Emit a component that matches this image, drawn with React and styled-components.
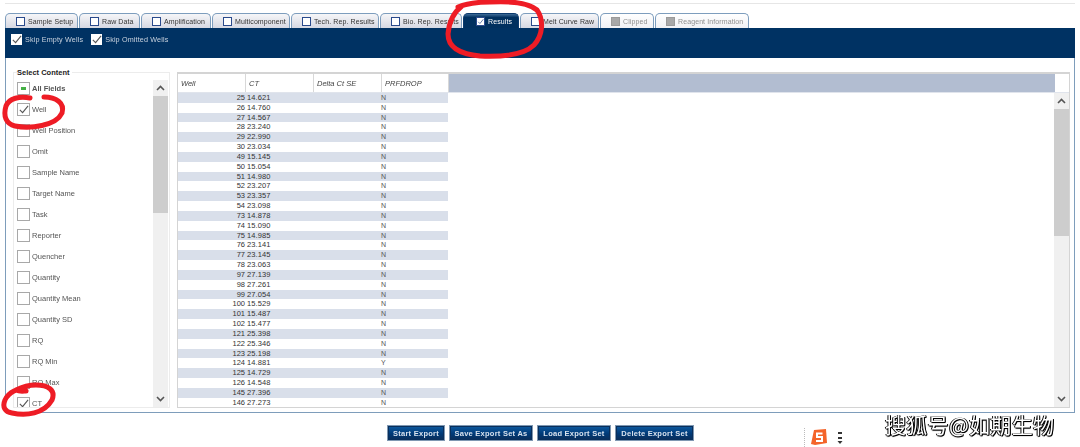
import React from 'react';
import styled, { createGlobalStyle } from 'styled-components';

const Global = createGlobalStyle`
  html, body { margin: 0; padding: 0; background: #fff; }
  body { font-family: "Liberation Sans", Arial, sans-serif; }
`;

const Page = styled.div`
  position: relative;
  width: 1080px;
  height: 447px;
  overflow: hidden;
  background: #fff;
`;

const Blurred = styled.div`
  filter: blur(0.4px);
`;

const TopLine = styled.div`
  height: 3px;
  margin: 0 5px;
  border-bottom: 1px solid #e6e6e6;
`;

const TabBar = styled.div`
  display: flex;
  gap: 1px;
  height: 15px;
  margin: 9px 0 0 5px;
`;

const Tab = styled.div`
  display: flex;
  align-items: center;
  gap: 3px;
  width: ${p => p.$w}px;
  padding-left: ${p => p.$pad || 10}px;
  box-sizing: border-box;
  font-size: 7px;
  letter-spacing: 0.1px;
  white-space: nowrap;
  border: 1px solid ${p => (p.$active ? '#0b3a6e' : '#7d9dbd')};
  border-bottom: 0;
  border-radius: 5px 5px 0 0;
  color: ${p => (p.$active ? '#fff' : p.$off ? '#8f8f8f' : '#333')};
  background: ${p => (p.$active
    ? 'linear-gradient(#3f6c98 0, #00305f 25%)'
    : p.$off ? 'linear-gradient(#fff, #f1f1f4)' : 'linear-gradient(#f6f6f8, #d6d8e2)')};
`;

const TabBox = styled.span`
  flex: none;
  display: flex;
  width: 9px;
  height: 9px;
  box-sizing: border-box;
  background: ${p => (p.$off ? '#a8a8a8' : '#fff')};
  border: 1px solid ${p => (p.$off ? '#9a9a9a' : '#2a4a8c')};
`;

const NavBar = styled.div`
  display: flex;
  align-items: flex-start;
  gap: 8px;
  height: 30px;
  margin: 0 5px;
  padding: 6px 0 0 6px;
  box-sizing: border-box;
  background: #003263;
`;

const SkipOption = styled.div`
  display: flex;
  align-items: center;
  gap: 3px;
  color: #c9d3df;
  font-size: 7.2px;
  letter-spacing: 0.15px;
`;

const SkipBox = styled.span`
  display: flex;
  width: 11px;
  height: 11px;
  background: #fff;
`;

const Frame = styled.div`
  display: flex;
  gap: 7px;
  height: 355px;
  margin: 0 5px;
  padding: 14px 4px 4px 7px;
  box-sizing: border-box;
  border: 1px solid #7e9dbb;
  border-top: 0;
`;

const SelectPanel = styled.div`
  position: relative;
  display: flex;
  width: 157px;
  flex: none;
  border: 1px solid #ececec;
  box-sizing: border-box;
`;

const PanelTitle = styled.div`
  position: absolute;
  left: 3px;
  top: -5px;
  padding-right: 2px;
  background: #fff;
  color: #222;
  font-size: 7.5px;
  font-weight: bold;
`;

const FieldList = styled.div`
  flex: 1;
  padding: 5px 0 0 3px;
  overflow: hidden;
`;

const FieldRow = styled.div`
  display: flex;
  align-items: center;
  gap: 2px;
  height: 21px;
  color: #555;
  font-size: 7.5px;
  font-weight: ${p => (p.$bold ? 'bold' : 'normal')};
`;

const FieldBox = styled.span`
  display: flex;
  align-items: center;
  justify-content: center;
  flex: none;
  width: 13px;
  height: 13px;
  box-sizing: border-box;
  background: #fff;
  border: 1px solid #a8a8a8;
`;

const Dash = styled.span`
  width: 5px;
  height: 3px;
  background: #45b045;
`;

const Scrollbar = styled.div`
  display: flex;
  flex-direction: column;
  flex: none;
  width: 15px;
  margin: ${p => p.$inset ? '7px 1px 0 0' : '0'};
  background: #f0f0f0;
`;

const ScrollBtn = styled.div`
  display: flex;
  align-items: center;
  justify-content: center;
  flex: none;
  height: 16px;
`;

const ScrollThumb = styled.div`
  flex: none;
  height: ${p => p.$h}px;
  background: #cdcdcd;
`;

const ScrollGap = styled.div`
  flex: 1;
`;

const TableWrap = styled.div`
  flex: 1;
  display: flex;
  flex-direction: column;
  border: 1px solid #d4d4d4;
  border-top-width: 2px;
  box-sizing: border-box;
`;

const HeadRow = styled.div`
  display: flex;
  flex: none;
  height: 19px;
  border-bottom: 1px solid #e0e4ec;
  box-sizing: border-box;
`;

const HeadCell = styled.div`
  display: flex;
  align-items: center;
  width: ${p => p.$w}px;
  box-sizing: border-box;
  padding-left: 3px;
  border-right: 1px solid #d8d8d8;
  color: #444;
  font-size: 7.5px;
  font-style: italic;
`;

const HeadFill = styled.div`
  width: 606px;
  background: #b2bdd1;
`;

const HeadEnd = styled.div`
  flex: 1;
`;

const TableBody = styled.div`
  flex: 1;
  display: flex;
  min-height: 0;
`;

const Rows = styled.div`
  flex: 1;
  overflow: hidden;
`;

const Row = styled.div`
  display: flex;
  width: 270px;
  height: 9.84px;
  line-height: 9.84px;
  font-size: 7.5px;
  color: #333;
  background: ${p => (p.$odd ? '#d9dfea' : '#fff')};
`;

const WellCell = styled.div`
  width: 67px;
  text-align: right;
`;

const CtCell = styled.div`
  width: 136px;
  padding-left: 2px;
  box-sizing: border-box;
  letter-spacing: 0.1px;
`;

const DropCell = styled.div`
  font-size: 7px;
  color: #555;
`;

const Buttons = styled.div`
  display: flex;
  gap: 4px;
  margin: 12px 0 0 387px;
`;

const ExportBtn = styled.div`
  display: flex;
  align-items: center;
  justify-content: center;
  width: ${p => p.$w}px;
  height: 16px;
  box-sizing: border-box;
  border: 1px solid #7f98b2;
  box-shadow: inset 0 0 0 1px #0a2f5c;
  background: linear-gradient(#0f5aa0, #003a78 55%, #0b2d58);
  color: #d8e2ee;
  font-size: 7.5px;
  font-weight: bold;
  letter-spacing: 0.25px;
`;

const Annotation = styled.svg`
  position: absolute;
  left: 0;
  top: 0;
  pointer-events: none;
`;

const Watermark = styled.div`
  position: absolute;
  left: 885px;
  top: 411px;
  color: #fff;
  font-family: "Noto Sans CJK SC", "Liberation Sans", sans-serif;
  font-size: 21px;
  line-height: 26px;
  letter-spacing: 0.3px;
  white-space: nowrap;
  text-shadow: 1px 1px 0 #000, -1px 0 0 #000, 0 1px 1px #000, 1px 0 0 #000;
`;

const SohuMark = styled.div`
  position: absolute;
  left: 804px;
  top: 428px;
  display: flex;
  align-items: center;
  gap: 10px;
  height: 19px;
  padding-left: 6px;
  border-left: 1px dotted #bbb;
`;

const Kebab = styled.svg`
  flex: none;
`;

const tabs = [
  { label: 'Sample Setup', w: 73 },
  { label: 'Raw Data', w: 61 },
  { label: 'Amplification', w: 70 },
  { label: 'Multicomponent', w: 78 },
  { label: 'Tech. Rep. Results', w: 88 },
  { label: 'Bio. Rep. Results', w: 82 },
  { label: 'Results', w: 56, active: true, pad: 12 },
  { label: 'Melt Curve Raw', w: 79 },
  { label: 'Clipped', w: 54, off: true },
  { label: 'Reagent Information', w: 94, off: true },
];

const fields = [
  'Well', 'Well Position', 'Omit', 'Sample Name', 'Target Name', 'Task', 'Reporter',
  'Quencher', 'Quantity', 'Quantity Mean', 'Quantity SD', 'RQ', 'RQ Min', 'RQ Max', 'CT',
];
const checked = ['Well', 'CT'];

const rows = [
  [25, '14.621'], [26, '14.760'], [27, '14.567'], [28, '23.240'], [29, '22.990'], [30, '23.034'],
  [49, '15.145'], [50, '15.054'], [51, '14.980'], [52, '23.207'], [53, '23.357'], [54, '23.098'],
  [73, '14.878'], [74, '15.090'], [75, '14.985'], [76, '23.141'], [77, '23.145'], [78, '23.063'],
  [97, '27.139'], [98, '27.261'], [99, '27.054'], [100, '15.529'], [101, '15.487'], [102, '15.477'],
  [121, '25.398'], [122, '25.346'], [123, '25.198'], [124, '14.881'], [125, '14.729'], [126, '14.548'],
  [145, '27.396'], [146, '27.273'],
];

const Tick = ({ size = 11, color = '#555' }) => (
  <svg width={size} height={size} viewBox="0 0 12 12">
    <path d="M2 6.5 L5 9.5 L11 2" fill="none" stroke={color} strokeWidth="1.2" />
  </svg>
);

const Chevron = ({ up }) => (
  <svg width="9" height="6" viewBox="0 0 9 6">
    <path d={up ? 'M1 5 L4.5 1.5 L8 5' : 'M1 1 L4.5 4.5 L8 1'} fill="none" stroke="#555" strokeWidth="1.6" />
  </svg>
);

const SohuLogo = () => (
  <svg width="16" height="17" viewBox="0 0 16 17">
    <path d="M3 1 L15 0 L16 14 L4 16 L0 15 Z" fill="#f4642a" />
    <path d="M11.5 4.5 H6 V8 H11 V12 H5" fill="none" stroke="#fff" strokeWidth="2" />
  </svg>
);

export default function App() {
  return (
    <Page>
      <Global />
      <Blurred>
        <TopLine />
        <TabBar>
          {tabs.map(t => (
            <Tab key={t.label} $w={t.w} $active={t.active} $off={t.off} $pad={t.pad}>
              <TabBox $off={t.off}>{t.active && <Tick size={7} color="#2a4a8c" />}</TabBox>
              {t.label}
            </Tab>
          ))}
        </TabBar>
        <NavBar>
          <SkipOption><SkipBox><Tick /></SkipBox>Skip Empty Wells</SkipOption>
          <SkipOption><SkipBox><Tick /></SkipBox>Skip Omitted Wells</SkipOption>
        </NavBar>
        <Frame>
          <SelectPanel>
            <PanelTitle>Select Content</PanelTitle>
            <FieldList>
              <FieldRow $bold><FieldBox><Dash /></FieldBox>All Fields</FieldRow>
              {fields.map(f => (
                <FieldRow key={f}>
                  <FieldBox>{checked.includes(f) && <Tick />}</FieldBox>
                  {f}
                </FieldRow>
              ))}
            </FieldList>
            <Scrollbar $inset>
              <ScrollBtn><Chevron up /></ScrollBtn>
              <ScrollThumb $h={117} />
              <ScrollGap />
              <ScrollBtn><Chevron /></ScrollBtn>
            </Scrollbar>
          </SelectPanel>
          <TableWrap>
            <HeadRow>
              <HeadCell $w={68}>Well</HeadCell>
              <HeadCell $w={68}>CT</HeadCell>
              <HeadCell $w={68}>Delta Ct SE</HeadCell>
              <HeadCell $w={67}>PRFDROP</HeadCell>
              <HeadFill />
              <HeadEnd />
            </HeadRow>
            <TableBody>
              <Rows>
                {rows.map(([well, ct], i) => (
                  <Row key={well} $odd={i % 2 === 0}>
                    <WellCell>{well}</WellCell>
                    <CtCell>{ct}</CtCell>
                    <DropCell>{well === 124 ? 'Y' : 'N'}</DropCell>
                  </Row>
                ))}
              </Rows>
              <Scrollbar>
                <ScrollBtn><Chevron up /></ScrollBtn>
                <ScrollThumb $h={127} />
                <ScrollGap />
                <ScrollBtn><Chevron /></ScrollBtn>
              </Scrollbar>
            </TableBody>
          </TableWrap>
        </Frame>
        <Buttons>
          <ExportBtn $w={58}>Start Export</ExportBtn>
          <ExportBtn $w={84}>Save Export Set As</ExportBtn>
          <ExportBtn $w={74}>Load Export Set</ExportBtn>
          <ExportBtn $w={79}>Delete Export Set</ExportBtn>
        </Buttons>
      </Blurred>
      <SohuMark>
        <SohuLogo />
        <Kebab width="6" height="13" viewBox="0 0 6 13">
          <path d="M1 1 H5 V3 H1 Z" fill="#333" />
          <path d="M1 6 H5 V8 H1 Z" fill="#333" />
          <path d="M0.5 10 H5.5 L3 13 Z" fill="#333" />
        </Kebab>
      </SohuMark>
      <Watermark>搜狐号@如期生物</Watermark>
      <Annotation width="1080" height="447" viewBox="0 0 1080 447">
        <g fill="none" stroke="#ee1c25" strokeWidth="5" strokeLinecap="round" strokeLinejoin="round">
          <path d="M462 6 C454 12 449 22 448 34 C448 46 458 54 480 56 C502 57 524 55 534 45 C543 35 544 20 537 10 C529 3 510 1 490 2 C478 2 468 3 458 7" />
          <path d="M30 98 C20 96 9 98 6 106 C3 116 6 124 15 126 C30 129 56 126 62 113 C65 103 56 97 44 97" />
          <path d="M26 391 C18 387 9 392 5 400 C2 407 5 412 12 413 C26 416 44 414 52 400 C56 390 48 385 36 385 C28 385 22 387 16 390 C20 392 24 391 26 391" />
        </g>
      </Annotation>
    </Page>
  );
}
